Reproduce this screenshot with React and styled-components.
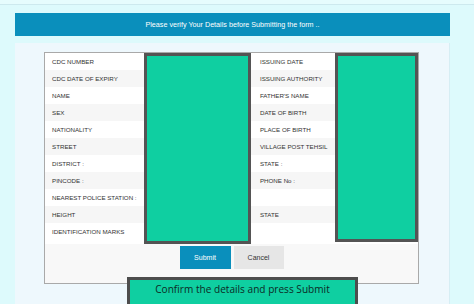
import React from "react";
import styled, { createGlobalStyle } from "styled-components";

const Global = createGlobalStyle`
  html, body { margin: 0; padding: 0; }
  body {
    background: #ddfafc;
    font-family: "Liberation Sans", Arial, sans-serif;
    width: 474px;
    height: 304px;
    overflow: hidden;
  }
`;

const Page = styled.div`
  position: relative;
  width: 474px;
  height: 304px;
  overflow: hidden;
`;

const TopStrip = styled.div`
  height: 4px;
  background: #e6fcfd;
  border-bottom: 1px solid #cde9ee;
`;

const Container = styled.div`
  margin: 8px 0 0 15px;
  width: 435px;
  display: flex;
  flex-direction: column;
  gap: 7px;
`;

const Header = styled.div`
  height: 23px;
  background: #0a8fbc;
  color: #ffffff;
  font-size: 7.2px;
  display: flex;
  align-items: center;
  justify-content: center;
`;

const Panel = styled.div`
  background: #eef8fd;
  border-right: 1px solid #d6eef4;
  padding: 9px 0 30px 29px;
  height: 300px;
`;

const Card = styled.div`
  width: 373px;
  border: 1px solid #a9a9a9;
  background: #f8f8f8;
`;

const Grid = styled.div`
  display: flex;
  align-items: flex-start;
  background: #ffffff;
`;

const LabelCol = styled.div`
  width: ${(p) => p.$w}px;
  display: flex;
  flex-direction: column;
  background: #ffffff;
`;

const Row = styled.div`
  height: 17px;
  display: flex;
  align-items: center;
  padding-left: ${(p) => p.$pad}px;
  font-size: 6.2px;
  color: #333333;
  background: ${(p) => (p.$alt ? "#f6f6f6" : "#ffffff")};
  white-space: nowrap;
`;

const Redact = styled.div`
  width: ${(p) => p.$w}px;
  height: ${(p) => p.$h}px;
  box-sizing: border-box;
  background: #0fcfa1;
  border: 3px solid #545454;
  flex-shrink: 0;
`;

const Footer = styled.div`
  display: flex;
  justify-content: center;
  gap: 3px;
  padding: 2px 0 14px;
  background: #f8f8f8;
`;

const Button = styled.button`
  width: ${(p) => p.$w}px;
  height: 23px;
  border: none;
  padding: 0;
  font-family: "Liberation Sans", Arial, sans-serif;
  font-size: 7px;
  background: ${(p) => (p.$primary ? "#0a8fbc" : "#e6e6e6")};
  color: ${(p) => (p.$primary ? "#ffffff" : "#333333")};
`;

const Caption = styled.div`
  position: absolute;
  left: 127px;
  top: 277px;
  width: 231px;
  height: 30px;
  box-sizing: border-box;
  background: #0fcfa1;
  border: 3px solid #4d4d4d;
  display: flex;
  justify-content: center;
  padding-top: 2px;
  font-family: "Open Sans", "Noto Sans", sans-serif;
  font-size: 10.1px;
  color: #0d2b26;
`;

const left = [
  "CDC NUMBER",
  "CDC DATE OF EXPIRY",
  "NAME",
  "SEX",
  "NATIONALITY",
  "STREET",
  "DISTRICT :",
  "PINCODE :",
  "NEAREST POLICE STATION :",
  "HEIGHT",
  "IDENTIFICATION MARKS",
];

const right = [
  "ISSUING DATE",
  "ISSUING AUTHORITY",
  "FATHER'S NAME",
  "DATE OF BIRTH",
  "PLACE OF BIRTH",
  "VILLAGE POST TEHSIL",
  "STATE :",
  "PHONE No :",
  "",
  "STATE",
  "",
];

export default function App() {
  return (
    <Page>
      <Global />
      <TopStrip />
      <Container>
        <Header>Please verify Your Details before Submitting the form ..</Header>
        <Panel>
          <Card>
            <Grid>
              <LabelCol $w={100}>
                {left.map((t, i) => (
                  <Row key={i} $alt={i % 2 === 1} $pad={7}>
                    {t}
                  </Row>
                ))}
              </LabelCol>
              <Redact $w={107} $h={191} />
              <LabelCol $w={85}>
                {right.map((t, i) => (
                  <Row key={i} $alt={i % 2 === 1} $pad={9}>
                    {t}
                  </Row>
                ))}
              </LabelCol>
              <Redact $w={83} $h={189} />
            </Grid>
            <Footer>
              <Button $primary $w={51}>Submit</Button>
              <Button $w={50}>Cancel</Button>
            </Footer>
          </Card>
        </Panel>
      </Container>
      <Caption>Confirm the details and press Submit</Caption>
    </Page>
  );
}
